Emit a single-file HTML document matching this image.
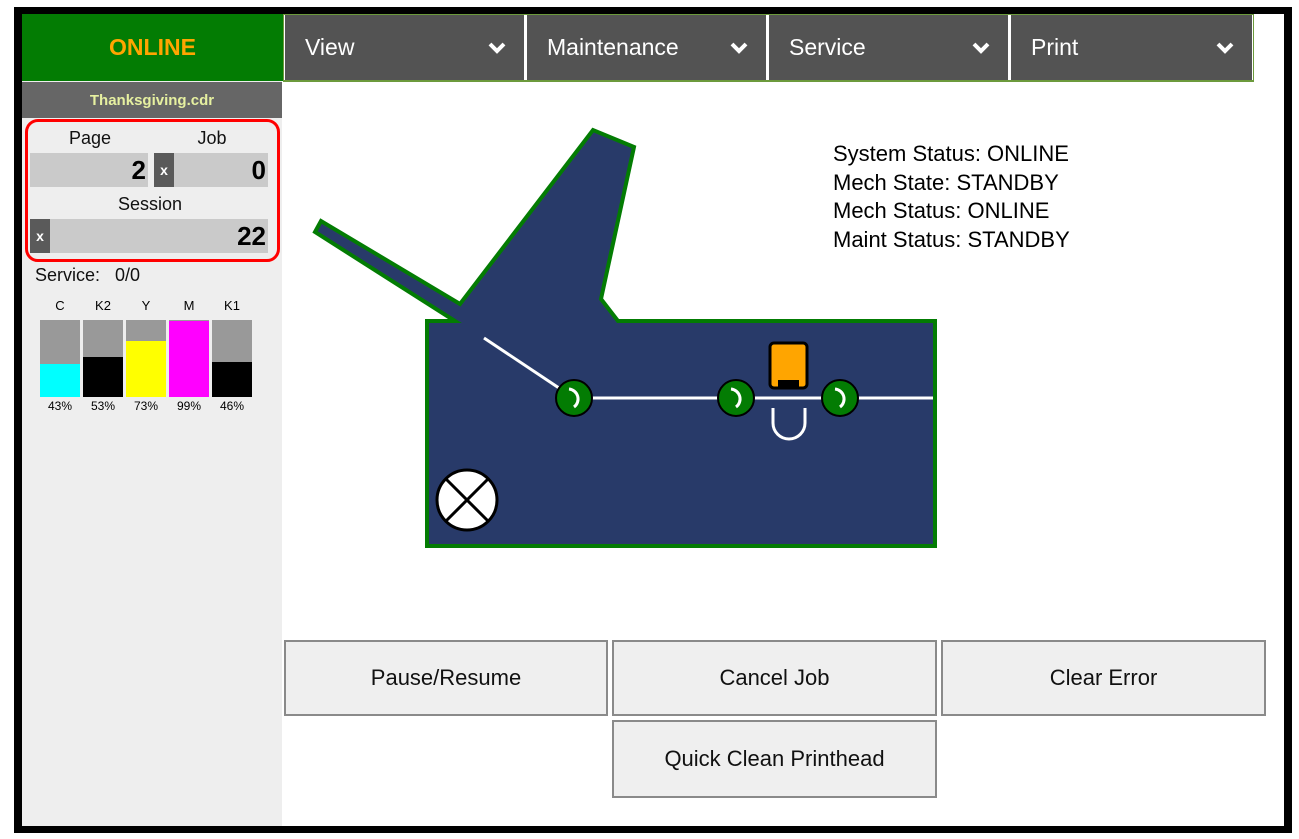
<!DOCTYPE html>
<html><head><style>
*{margin:0;padding:0;box-sizing:border-box}
body{width:1299px;height:839px;background:#fff;position:relative;overflow:hidden;font-family:"Liberation Sans",Arial,sans-serif}
.a{position:absolute}
.menu{position:absolute;top:15px;height:65px;background:#535353;color:#fff;font-size:23px;padding:19px 0 0 20px}
.menu svg{position:absolute;right:18px;top:27px}
.lbl{position:absolute;font-size:18px;color:#111;text-align:center}
.val{position:absolute;background:#cacaca;font-size:26px;font-weight:bold;text-align:right;padding-right:2px;line-height:34px;color:#000}
.x{position:absolute;background:#5a5a5a;color:#fff;font-size:14px;text-align:center;line-height:34px;font-weight:bold}
.btn{position:absolute;background:#efefef;border:2px solid #8a8a8a;font-size:22px;text-align:center;color:#111}
.ink{position:absolute;width:40px;height:77px;top:320px;background:#999}
.ink div{position:absolute;bottom:0;left:0;width:40px}
.il{position:absolute;font-size:13px;width:40px;text-align:center}
</style></head><body>
<div class="a" style="left:14px;top:7px;width:1278px;height:826px;background:#000"></div>
<div class="a" style="left:22px;top:14px;width:1262px;height:812px;background:#fff"></div>
<div class="a" style="left:22px;top:14px;width:260px;height:812px;background:#eeeeee"></div>
<div class="a" style="left:22px;top:14px;width:261px;height:67px;background:#037c03;color:#ffa500;font-size:23px;font-weight:bold;text-align:center;line-height:67px">ONLINE</div>
<div class="a" style="left:283px;top:14px;width:971px;height:68px;background:#6c9a3c"></div>
<div class="a" style="left:284px;top:15px;width:969px;height:65px;background:#fff"></div>
<div class="menu" style="left:285px;width:239px">View<svg width="18" height="12" viewBox="0 0 18 12"><path d="M2 2l7 7 7-7" stroke="#fff" stroke-width="4" fill="none"/></svg></div>
<div class="menu" style="left:527px;width:239px">Maintenance<svg width="18" height="12" viewBox="0 0 18 12"><path d="M2 2l7 7 7-7" stroke="#fff" stroke-width="4" fill="none"/></svg></div>
<div class="menu" style="left:769px;width:239px">Service<svg width="18" height="12" viewBox="0 0 18 12"><path d="M2 2l7 7 7-7" stroke="#fff" stroke-width="4" fill="none"/></svg></div>
<div class="menu" style="left:1011px;width:241px">Print<svg width="18" height="12" viewBox="0 0 18 12"><path d="M2 2l7 7 7-7" stroke="#fff" stroke-width="4" fill="none"/></svg></div>
<div class="a" style="left:22px;top:82px;width:260px;height:36px;background:#666;color:#e6f0a0;font-size:15px;font-weight:bold;text-align:center;line-height:38px">Thanksgiving.cdr</div>
<div class="a" style="left:25px;top:119px;width:255px;height:143px;border:3px solid #f00;border-radius:13px"></div>
<div class="lbl" style="left:60px;top:128px;width:60px">Page</div>
<div class="lbl" style="left:182px;top:128px;width:60px">Job</div>
<div class="val" style="left:30px;top:153px;width:118px">2</div>
<div class="val" style="left:174px;top:153px;width:94px">0</div>
<div class="x" style="left:154px;top:153px;width:20px">x</div>
<div class="lbl" style="left:100px;top:194px;width:100px">Session</div>
<div class="val" style="left:30px;top:219px;width:238px">22</div>
<div class="x" style="left:30px;top:219px;width:20px">x</div>
<div class="a" style="left:35px;top:265px;font-size:18px;color:#111">Service:&nbsp;&nbsp; 0/0</div>
<div class="il" style="left:40px;top:298px">C</div><div class="il" style="left:83px;top:298px">K2</div><div class="il" style="left:126px;top:298px">Y</div><div class="il" style="left:169px;top:298px">M</div><div class="il" style="left:212px;top:298px">K1</div>
<div class="ink" style="left:40px"><div style="height:33px;background:#0ff"></div></div>
<div class="ink" style="left:83px"><div style="height:40px;background:#000"></div></div>
<div class="ink" style="left:126px"><div style="height:56px;background:#ff0"></div></div>
<div class="ink" style="left:169px"><div style="height:76px;background:#f0f"></div></div>
<div class="ink" style="left:212px"><div style="height:35px;background:#000"></div></div>
<div class="il" style="left:40px;top:399px;font-size:12px">43%</div><div class="il" style="left:83px;top:399px;font-size:12px">53%</div><div class="il" style="left:126px;top:399px;font-size:12px">73%</div><div class="il" style="left:169px;top:399px;font-size:12px">99%</div><div class="il" style="left:212px;top:399px;font-size:12px">46%</div>
<svg class="a" style="left:0;top:0" width="1299" height="839">
<polygon points="427,321 455,321 315,232 321,221 460,304 593,130 634,147 601,299 618,321 935,321 935,546 427,546" fill="#283a69" stroke="#037c03" stroke-width="4" stroke-linejoin="miter"/>
<line x1="484" y1="338" x2="562" y2="390" stroke="#fff" stroke-width="3"/>
<line x1="574" y1="398" x2="933" y2="398" stroke="#fff" stroke-width="3"/>
<g stroke="#000" stroke-width="2" fill="#037c03"><circle cx="574" cy="398" r="18"/><circle cx="736" cy="398" r="18"/><circle cx="840" cy="398" r="18"/></g>
<g stroke="#fff" stroke-width="3" fill="none"><path d="M569 389a10 10 0 0 1 5 18"/><path d="M731 389a10 10 0 0 1 5 18"/><path d="M835 389a10 10 0 0 1 5 18"/></g>
<rect x="770" y="343" width="37" height="45" rx="4" fill="#ffa500" stroke="#000" stroke-width="3"/>
<rect x="778" y="380" width="21" height="7" fill="#000"/>
<path d="M773 408v15a16 16 0 0 0 32 0v-15" stroke="#fff" stroke-width="3" fill="none"/>
<circle cx="467" cy="500" r="30" fill="#fff" stroke="#000" stroke-width="3"/>
<path d="M446 479l42 42M488 479l-42 42" stroke="#000" stroke-width="3"/>
</svg>
<div class="a" style="left:833px;top:140px;font-size:22px;line-height:28.5px;color:#000">System Status:&nbsp;ONLINE<br>Mech State:&nbsp;STANDBY<br>Mech Status:&nbsp;ONLINE<br>Maint Status:&nbsp;STANDBY</div>
<div class="btn" style="left:284px;top:640px;width:324px;height:76px;line-height:72px">Pause/Resume</div>
<div class="btn" style="left:612px;top:640px;width:325px;height:76px;line-height:72px">Cancel Job</div>
<div class="btn" style="left:941px;top:640px;width:325px;height:76px;line-height:72px">Clear Error</div>
<div class="btn" style="left:612px;top:720px;width:325px;height:78px;line-height:74px">Quick Clean Printhead</div>
</body></html>
